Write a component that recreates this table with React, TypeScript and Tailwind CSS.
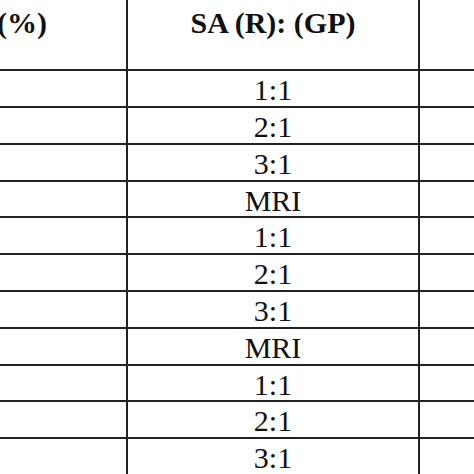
import React from "react";

const rows: { label: string; h: string }[] = [
  { label: "1:1", h: "h-[37px]" },
  { label: "2:1", h: "h-[37px]" },
  { label: "3:1", h: "h-[37px]" },
  { label: "MRI", h: "h-[36px]" },
  { label: "1:1", h: "h-[37px]" },
  { label: "2:1", h: "h-[37px]" },
  { label: "3:1", h: "h-[37px]" },
  { label: "MRI", h: "h-[37px]" },
  { label: "1:1", h: "h-[36px]" },
  { label: "2:1", h: "h-[37px]" },
  { label: "3:1", h: "h-[40px]" },
];

export default function App() {
  return (
    <div
      className="w-[474px] h-[474px] overflow-hidden bg-white text-[#111]"
      style={{ fontFamily: '"Liberation Serif", "Times New Roman", serif' }}
    >
      <div className="flex h-[71px] border-b-2 border-[#222]">
        <div className="w-[128px] shrink-0 border-r-2 border-[#222] overflow-hidden pt-[5px]">
          <div className="-ml-[3px] text-[30px] leading-[35px] font-bold whitespace-nowrap">(%)</div>
        </div>
        <div className="w-[292px] shrink-0 border-r-2 border-[#222] flex justify-center pt-[5px]">
          <div className="text-[30px] leading-[35px] font-bold whitespace-nowrap">SA (R): (GP)</div>
        </div>
        <div className="flex-1" />
      </div>
      {rows.map((r, i) => (
        <div key={i} className={`flex ${r.h} border-b-2 border-[#222]`}>
          <div className="w-[128px] shrink-0 border-r-2 border-[#222]" />
          <div className="w-[292px] shrink-0 border-r-2 border-[#222] flex justify-center pt-[1px]">
            <div className="text-[30px] leading-[35px] whitespace-nowrap">{r.label}</div>
          </div>
          <div className="flex-1" />
        </div>
      ))}
    </div>
  );
}
